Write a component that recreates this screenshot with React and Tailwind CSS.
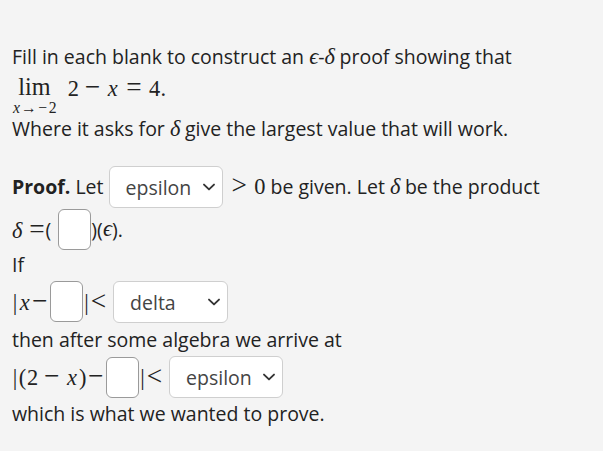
import React from "react";

const body = { fontFamily: '"Open Sans", "Noto Sans", sans-serif' };
const tex = { fontFamily: '"Liberation Serif", "Times New Roman", serif' };

// one math glyph in a box as wide as its Computer Modern advance
function G({ w, i, big, children }) {
  return (
    <span className={`inline-block text-center ${w} ${i ? "italic" : ""}`}>
      {big ? <span className="text-[1.22em] leading-none">{children}</span> : children}
    </span>
  );
}

function M({ children, size = "text-[22.4px]" }) {
  return (
    <span style={tex} className={`inline-flex items-baseline whitespace-nowrap leading-none ${size}`}>
      {children}
    </span>
  );
}

function Chevron() {
  return (
    <svg width="14" height="14" viewBox="0 0 14 14" className="shrink-0">
      <path d="M2 4.6 L7 9.4 L12 4.6" fill="none" stroke="#333" strokeWidth="1.9" strokeLinecap="round" strokeLinejoin="round" />
    </svg>
  );
}

function Pick({ label, width }) {
  return (
    <div
      className={`flex h-[42px] ${width} items-center justify-between rounded-[6px] border border-[#cfcfcf] bg-white pl-4 pr-[6px] text-[#444]`}
    >
      <span className="pt-[2px]">{label}</span>
      <Chevron />
    </div>
  );
}

function Blank() {
  return <div className="h-[41px] w-[33px] shrink-0 rounded-[6px] border border-[#9a9a9a] bg-white" />;
}

export default function App() {
  return (
    <div className="min-h-[451px] w-[603px] bg-[#f4f4f4] pl-[12px] pt-[42px] text-[19.5px] text-[#222]" style={body}>
      <div className="flex h-[30px] items-center whitespace-nowrap">
        Fill in each blank to construct an&nbsp;
        <M>
          <G w="w-[0.406em]" i>ϵ</G>
        </M>
        -
        <M>
          <G w="w-[0.444em]" i>δ</G>
        </M>
        &nbsp;proof showing that
      </div>

      <div className="flex h-[42px] items-start pt-[2px]">
        <div className="flex flex-col items-center">
          <M>
            <span className="text-[1.08em] leading-[26px]">lim</span>
          </M>
          <M size="text-[15.7px]">
            <G w="w-[0.572em]" i>x</G>
            <G w="w-[1em]">→</G>
            <G w="w-[0.778em]">−</G>
            <G w="w-[0.5em]">2</G>
          </M>
        </div>
        <span className="ml-[11px] leading-[26px]">
          <M>
            <G w="w-[0.5em]">2</G>
            <span className="w-[0.222em]" />
            <G w="w-[0.778em]" big>−</G>
            <span className="w-[0.222em]" />
            <G w="w-[0.572em]" i>x</G>
            <span className="w-[0.278em]" />
            <G w="w-[0.778em]" big>=</G>
            <span className="w-[0.278em]" />
            <G w="w-[0.5em]">4</G>
            <G w="w-[0.278em]">.</G>
          </M>
        </span>
      </div>

      <div className="flex h-[30px] items-center whitespace-nowrap">
        Where it asks for&nbsp;
        <M>
          <G w="w-[0.444em]" i>δ</G>
        </M>
        &nbsp;give the largest value that will work.
      </div>

      <div className="mt-[21px] flex h-[44px] items-center whitespace-nowrap">
        <b className="font-bold">Proof.</b>&nbsp;Let&nbsp;
        <Pick label="epsilon" width="w-[114px]" />
        <span className="ml-[8px]">
          <M>
            <G w="w-[0.778em]" big>&gt;</G>
            <span className="w-[0.278em]" />
            <G w="w-[0.5em]">0</G>
          </M>
        </span>
        &nbsp;be given. Let&nbsp;
        <M>
          <G w="w-[0.444em]" i>δ</G>
        </M>
        &nbsp;be the product
      </div>

      <div className="flex h-[41px] items-center">
        <M>
          <G w="w-[0.444em]" i>δ</G>
          <span className="w-[0.278em]" />
          <G w="w-[0.778em]" big>=</G>
        </M>
        <span>(</span>
        <div className="ml-[7px]">
          <Blank />
        </div>
        <span>)(</span>
        <M>
          <G w="w-[0.406em]" i>ϵ</G>
        </M>
        <span>).</span>
      </div>

      <div className="flex h-[30px] items-center">If</div>

      <div className="flex h-[43px] items-center">
        <M>
          <G w="w-[0.278em]">|</G>
          <G w="w-[0.572em]" i>x</G>
          <G w="w-[0.778em]" big>−</G>
        </M>
        <div className="ml-[2px]">
          <Blank />
        </div>
        <M>
          <G w="w-[0.278em]">|</G>
          <G w="w-[0.778em]" big>&lt;</G>
        </M>
        <div className="ml-[6px]">
          <Pick label="delta" width="w-[115px]" />
        </div>
      </div>

      <div className="mt-[2px] flex h-[30px] items-center">then after some algebra we arrive at</div>

      <div className="flex h-[44px] items-center">
        <M>
          <G w="w-[0.278em]">|</G>
          <G w="w-[0.389em]">(</G>
          <G w="w-[0.5em]">2</G>
          <span className="w-[0.222em]" />
          <G w="w-[0.778em]" big>−</G>
          <span className="w-[0.222em]" />
          <G w="w-[0.572em]" i>x</G>
          <G w="w-[0.389em]">)</G>
          <G w="w-[0.778em]" big>−</G>
        </M>
        <div className="ml-[2px]">
          <Blank />
        </div>
        <M>
          <G w="w-[0.278em]">|</G>
          <G w="w-[0.778em]" big>&lt;</G>
        </M>
        <div className="ml-[6px]">
          <Pick label="epsilon" width="w-[114px]" />
        </div>
      </div>

      <div className="flex h-[30px] items-center">which is what we wanted to prove.</div>
    </div>
  );
}
